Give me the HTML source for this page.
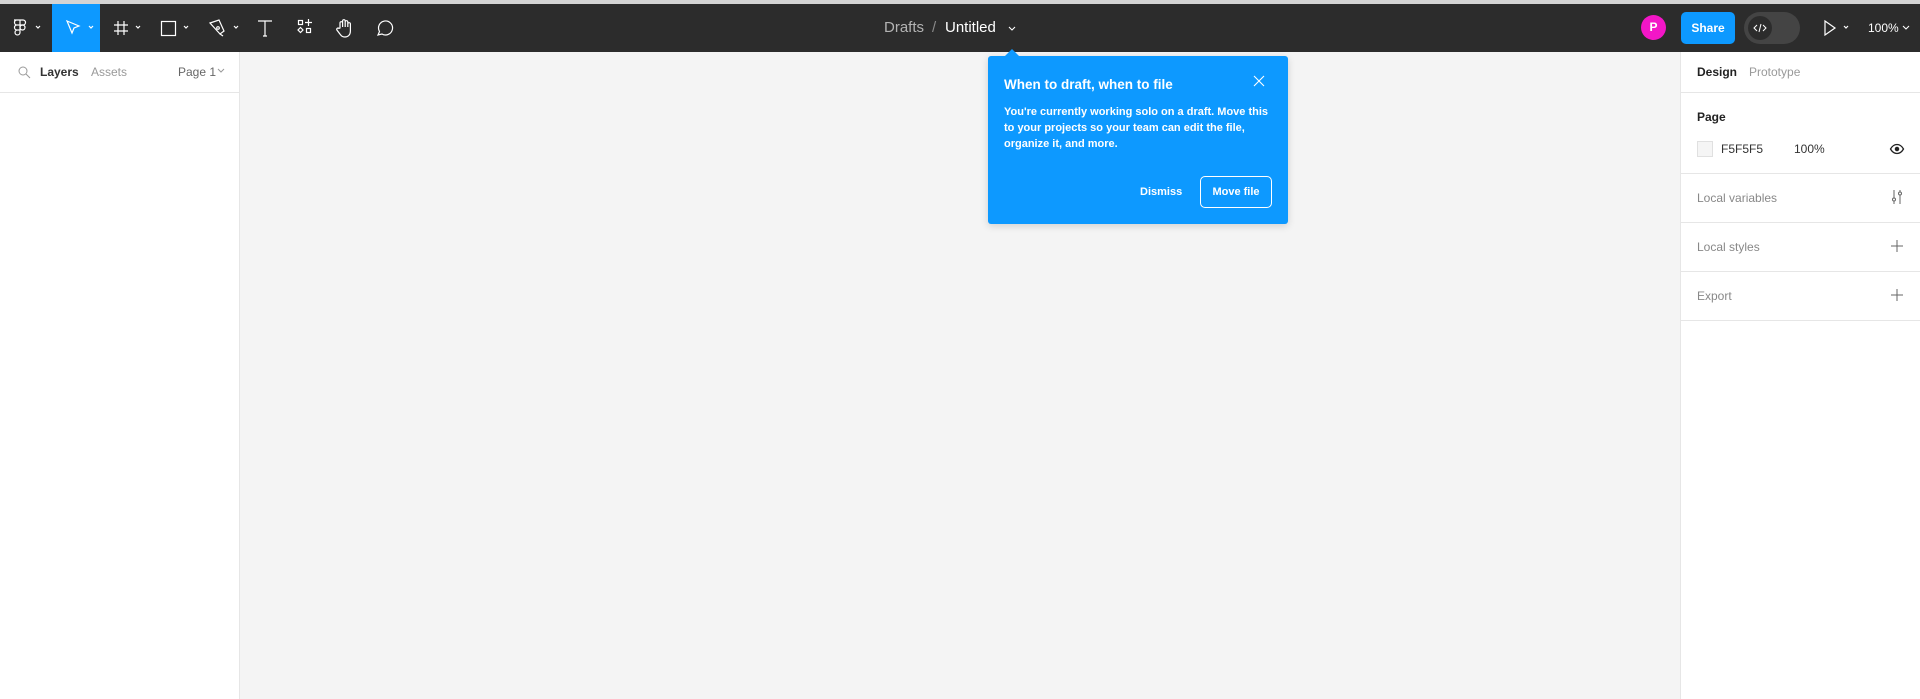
<!DOCTYPE html>
<html><head><style>
*{margin:0;padding:0;box-sizing:border-box}
body{width:1920px;height:699px;overflow:hidden;background:#f4f4f4;font-family:"Liberation Sans",sans-serif;position:relative}
.abs{position:absolute}
#top{left:0;top:0;width:1920px;height:4px;background:#d4d4d4}
#bar{left:0;top:4px;width:1920px;height:48px;background:#2c2c2c}
#left{left:0;top:52px;width:240px;height:647px;background:#fff;border-right:1px solid #e6e6e6}
#right{left:1680px;top:52px;width:240px;height:647px;background:#fff;border-left:1px solid #e6e6e6}
.sep{position:absolute;left:0;width:100%;height:1px;background:#e6e6e6}
.t{position:absolute;font-size:12px;white-space:nowrap}
svg{position:absolute}
</style></head><body>
<div id="top" class="abs"></div>
<div id="bar" class="abs">
  <div class="abs" style="left:52px;top:0;width:48px;height:48px;background:#0d99ff"></div>
  <svg style="left:12px;top:12px" width="30" height="24" viewBox="0 0 30 24" fill="none" stroke="#fff" stroke-width="1.2">
    <path d="M2 4h6v5H5a2.5 2.5 0 0 1 0-5zM8 4h3a2.5 2.5 0 0 1 0 5H8zM8 9h-3a2.5 2.5 0 0 0 0 5h3zM8 14h-3a2.5 2.5 0 1 0 3 2.5zM8 9v5"/><circle cx="10.5" cy="11.5" r="2.5"/>
    <path d="M24 10l2 2 2-2"/></svg>
  <svg style="left:60px;top:12px" width="40" height="24" fill="none" stroke="#fff" stroke-width="1.2"><path d="M7 5l12 5-5 2-2 5z"/><path d="M29 10l2 2 2-2"/></svg>
  <svg style="left:110px;top:12px" width="40" height="24" fill="none" stroke="#fff" stroke-width="1.2"><path d="M8 5v14M14 5v14M4 9h14M4 15h14"/><path d="M26 10l2 2 2-2"/></svg>
  <svg style="left:158px;top:12px" width="40" height="24" fill="none" stroke="#fff" stroke-width="1.2"><rect x="3.5" y="5.5" width="14" height="14"/><path d="M26 10l2 2 2-2"/></svg>
  <svg style="left:206px;top:12px" width="40" height="24" fill="none" stroke="#fff" stroke-width="1.2"><path d="M4 7l9-3 5 11-4 3z"/><circle cx="12" cy="12" r="1.3"/><path d="M14 18l3 2"/><path d="M28 10l2 2 2-2"/></svg>
  <svg style="left:254px;top:12px" width="24" height="24" fill="none" stroke="#fff" stroke-width="1.2"><path d="M4 5h14M11 5v15M9 20h4"/></svg>
  <svg style="left:294px;top:12px" width="24" height="24" fill="none" stroke="#fff" stroke-width="1.2"><rect x="4.5" y="4.5" width="4" height="4"/><rect x="12.5" y="12.5" width="4" height="4"/><path d="M14.5 3v7M11 6.5h7M6.5 11.5l2.5 2.5-2.5 2.5-2.5-2.5z"/></svg>
  <svg style="left:333px;top:12px" width="24" height="24" fill="none" stroke="#fff" stroke-width="1.2"><path d="M7 12V7a1.3 1.3 0 0 1 2.6 0v4V5a1.3 1.3 0 0 1 2.6 0v6V6a1.3 1.3 0 0 1 2.6 0v5V8a1.3 1.3 0 0 1 2.6 0v7c0 4-2.5 6-5.5 6-2.5 0-3.5-1-5-3l-3-4a1.3 1.3 0 0 1 2-1.6z"/></svg>
  <svg style="left:372px;top:12px" width="24" height="24" fill="none" stroke="#fff" stroke-width="1.2"><path d="M6 19l1.5-3.5A7 7 0 1 1 10 18z"/></svg>
  <div class="t" style="left:884px;top:15px;font-size:15px;color:#b3b3b3">Drafts</div>
  <div class="t" style="left:932px;top:15px;font-size:15px;color:#8a8a8a">/</div>
  <div class="t" style="left:945px;top:15px;font-size:15px;color:#fff">Untitled</div>
  <svg style="left:1006px;top:18px" width="12" height="12" fill="none" stroke="#fff" stroke-width="1.1"><path d="M3 5l3 3 3-3"/></svg>
  <div class="abs" style="left:1641px;top:11px;width:25px;height:25px;border-radius:50%;background:#f316c7;color:#fff;font-size:12px;font-weight:bold;text-align:center;line-height:25px">P</div>
  <div class="abs" style="left:1681px;top:8px;width:54px;height:32px;border-radius:5px;background:#0d99ff;color:#fff;font-size:12px;font-weight:bold;text-align:center;line-height:32px">Share</div>
  <div class="abs" style="left:1744px;top:8px;width:56px;height:32px;border-radius:16px;background:#444"></div>
  <div class="abs" style="left:1748px;top:12px;width:24px;height:24px;border-radius:12px;background:#2c2c2c"></div>
  <svg style="left:1748px;top:12px" width="24" height="24" fill="none" stroke="#fff" stroke-width="1"><path d="M9 9l-3 3 3 3M15 9l3 3-3 3M13 8l-2 8"/></svg>
  <svg style="left:1818px;top:12px" width="40" height="24" fill="none" stroke="#fff" stroke-width="1.2"><path d="M7 5l10 7-10 7z"/><path d="M26 10l2 2 2-2"/></svg>
  <div class="t" style="left:1868px;top:17px;color:#fff">100%</div>
  <svg style="left:1900px;top:18px" width="12" height="12" fill="none" stroke="#fff" stroke-width="1.1"><path d="M3 4l3 3 3-3"/></svg>
</div>
<div id="left" class="abs">
  <svg style="left:16px;top:12px" width="16" height="16" fill="none" stroke="#999" stroke-width="1"><circle cx="7" cy="7" r="4"/><path d="M10 10l4 4"/></svg>
  <div class="t" style="left:40px;top:13px;font-weight:bold;color:#333">Layers</div>
  <div class="t" style="left:91px;top:13px;color:#999">Assets</div>
  <div class="t" style="left:178px;top:13px;color:#666">Page 1</div>
  <svg style="left:216px;top:14px" width="10" height="10" fill="none" stroke="#999"><path d="M2 3l3 3 3-3"/></svg>
  <div class="sep" style="top:40px"></div>
</div>
<div id="right" class="abs">
  <div class="t" style="left:16px;top:13px;font-weight:bold;color:#222">Design</div>
  <div class="t" style="left:68px;top:13px;color:#999">Prototype</div>
  <div class="sep" style="top:40px"></div>
  <div class="t" style="left:16px;top:58px;font-weight:bold;color:#222">Page</div>
  <div class="abs" style="left:16px;top:89px;width:16px;height:16px;background:#f5f5f5;border:1px solid #e0e0e0"></div>
  <div class="t" style="left:40px;top:90px;color:#333">F5F5F5</div>
  <div class="t" style="left:113px;top:90px;color:#333">100%</div>
  <svg style="left:208px;top:89px" width="16" height="16" fill="none" stroke="#222" stroke-width="1.3"><path d="M1.5 8c2-3.5 4-4.5 6.5-4.5s4.5 1 6.5 4.5c-2 3.5-4 4.5-6.5 4.5S3.5 11.5 1.5 8z"/><circle cx="8" cy="8" r="1.6" fill="#222"/></svg>
  <div class="sep" style="top:121px"></div>
  <div class="t" style="left:16px;top:139px;color:#888">Local variables</div>
  <svg style="left:208px;top:136px" width="16" height="18" fill="none" stroke="#666" stroke-width="1"><path d="M5 2v8M5 13v3M11 2v2M11 7v9"/><circle cx="5" cy="11.5" r="1.5"/><circle cx="11" cy="5.5" r="1.5"/></svg>
  <div class="sep" style="top:170px"></div>
  <div class="t" style="left:16px;top:188px;color:#888">Local styles</div>
  <svg style="left:208px;top:186px" width="16" height="16" fill="none" stroke="#666" stroke-width="1"><path d="M8 2v12M2 8h12"/></svg>
  <div class="sep" style="top:219px"></div>
  <div class="t" style="left:16px;top:237px;color:#888">Export</div>
  <svg style="left:208px;top:235px" width="16" height="16" fill="none" stroke="#666" stroke-width="1"><path d="M8 2v12M2 8h12"/></svg>
  <div class="sep" style="top:268px"></div>
</div>
<div class="abs" style="left:988px;top:56px;width:300px;height:168px;background:#0d99ff;border-radius:3px;box-shadow:0 2px 8px rgba(0,0,0,.15)"></div>
<div class="abs" style="left:1004px;top:49px;width:0;height:0;border-left:8px solid transparent;border-right:8px solid transparent;border-bottom:8px solid #0d99ff"></div>
<div class="t" style="left:1004px;top:77px;font-size:13.5px;font-weight:bold;color:#fff">When to draft, when to file</div>
<svg style="left:1252px;top:74px" width="14" height="14" fill="none" stroke="#fff" stroke-width="1.1"><path d="M2 2l10 10M12 2L2 12"/></svg>
<div class="t" style="left:1004px;top:104px;font-size:11px;font-weight:bold;color:#fff;line-height:16px">You're currently working solo on a draft. Move this<br>to your projects so your team can edit the file,<br>organize it, and more.</div>
<div class="t" style="left:1140px;top:186px;font-size:11px;font-weight:bold;color:#fff">Dismiss</div>
<div class="abs" style="left:1200px;top:176px;width:72px;height:32px;border:1px solid #fff;border-radius:5px;color:#fff;font-size:11px;font-weight:bold;text-align:center;line-height:30px">Move file</div>
</body></html>
